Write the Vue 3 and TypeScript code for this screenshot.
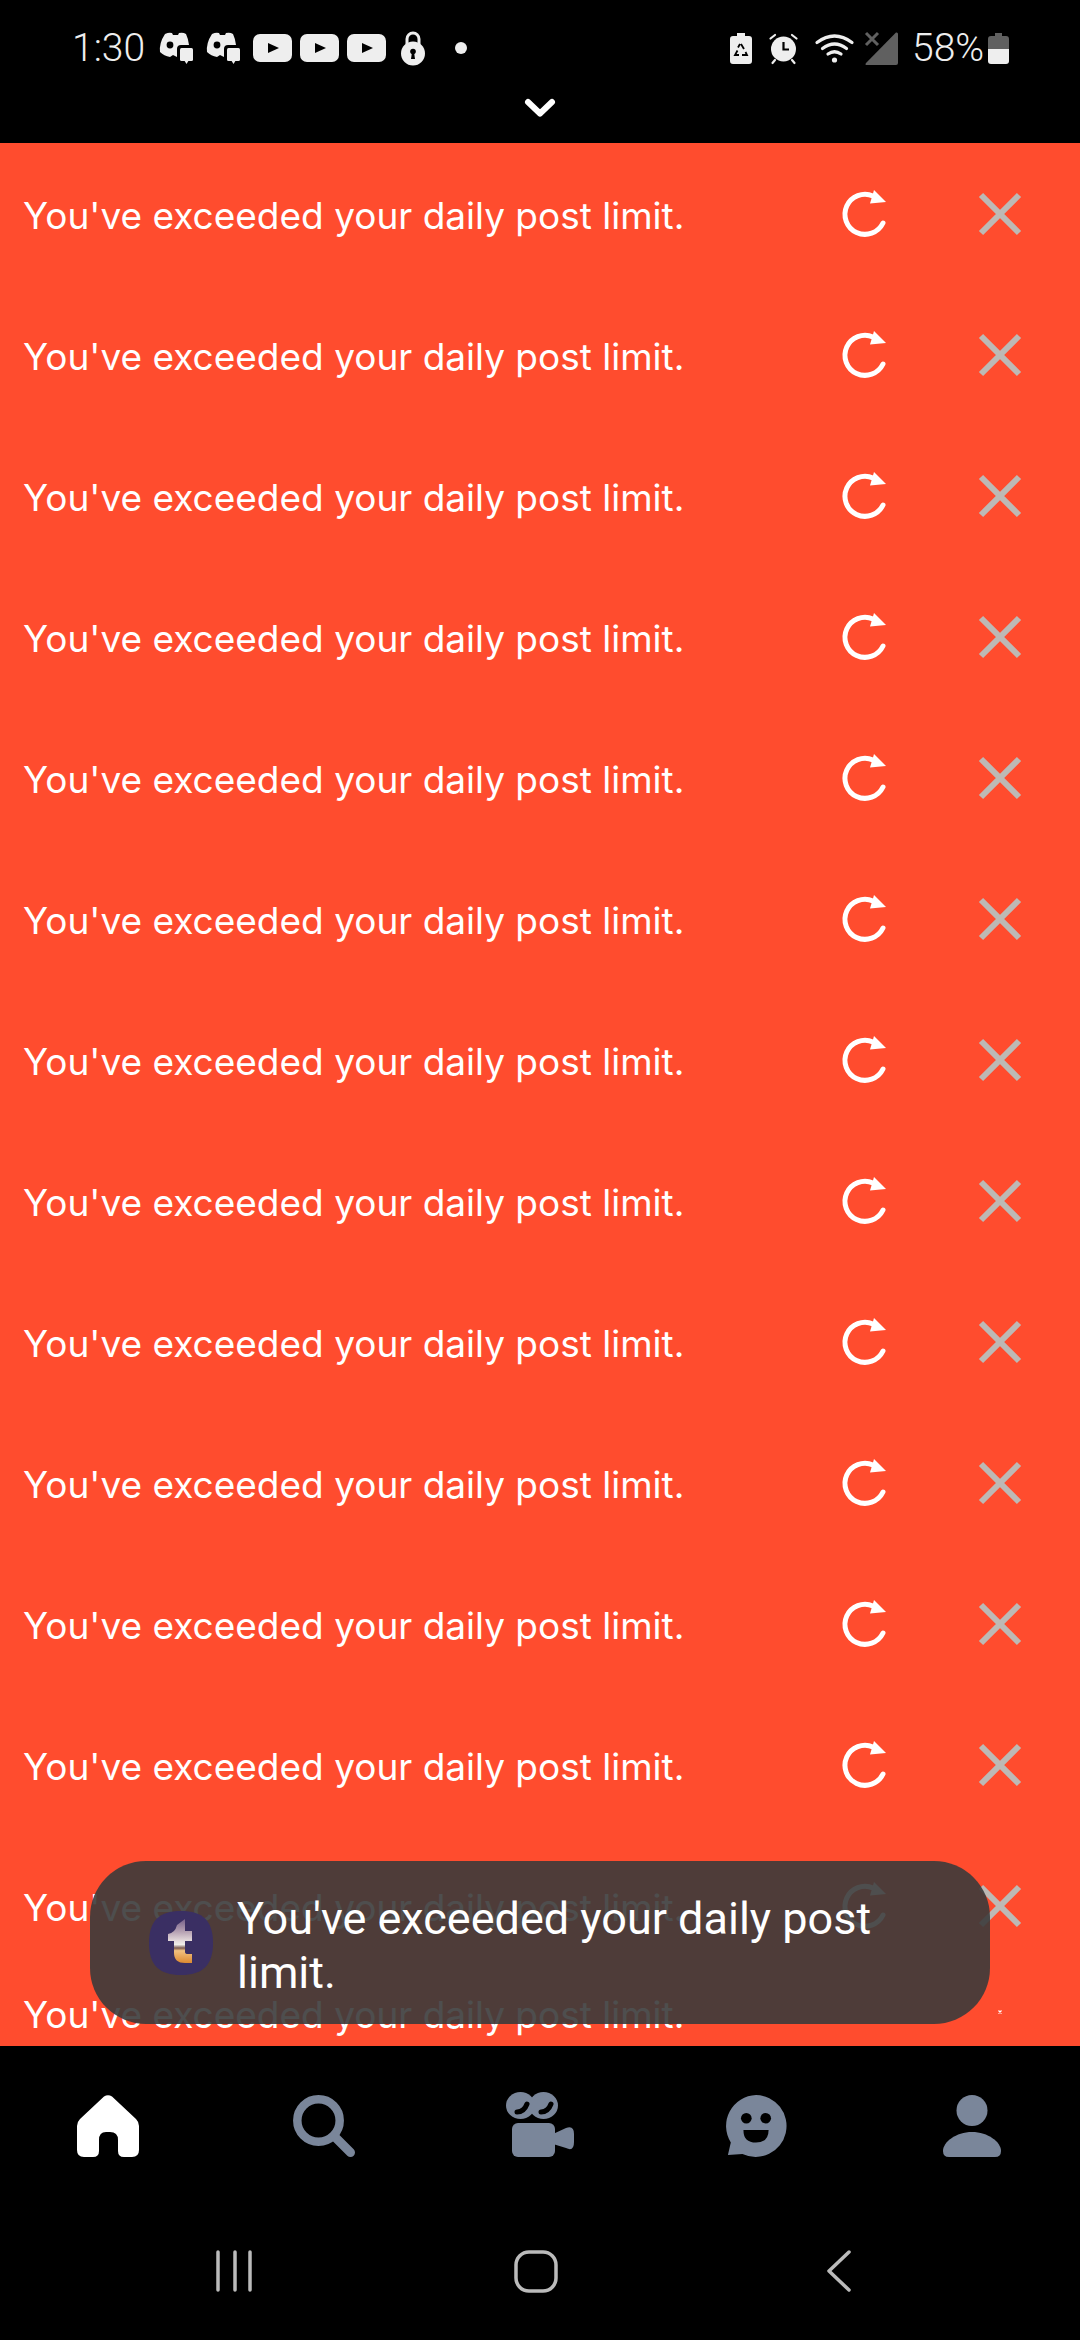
<script setup lang="ts">
const message = "You've exceeded your daily post limit."
const rows = Array.from({ length: 13 }, (_, i) => i)
</script>

<template>
  <div class="screen">
    <!-- status bar -->
    <header class="top">
      <div class="status">
        <div class="status-left">
          <span class="clock">1:30</span>
          <svg v-for="n in 2" :key="'d' + n" class="ic-discord" viewBox="0 0 34 33">
            <path fill="#eee" d="M6 2 Q10 0 13 1 L14 3 H19 L20 1 Q24 0 27 2 Q29 6 30 13 H22 Q18 13 18 17 V25 L14 23 L11 25 Q5 24 1 20 Q0 11 6 2Z" />
            <circle cx="11" cy="13" r="3.400" fill="#000" />
            <rect x="21" y="16" width="13" height="13" rx="1.500" fill="#eee" />
            <path fill="#eee" d="M25 28 H30 L27.500 32Z" />
          </svg>
          <svg v-for="n in 3" :key="'y' + n" class="ic-yt" viewBox="0 0 39 28">
            <rect width="39" height="28" rx="7" fill="#eee" />
            <path fill="#000" d="M15 9 L26 14 L15 19Z" />
          </svg>
          <svg class="ic-lock" viewBox="0 0 24 36">
            <path fill="none" stroke="#eee" stroke-width="3" d="M6 16 V9 A6 6 0 0 1 18 9 V16" />
            <circle cx="12" cy="23.500" r="12" fill="#eee" />
            <circle cx="12" cy="21.500" r="2.800" fill="#000" />
            <path fill="#000" d="M11 22 H13 L14 29 H10Z" />
          </svg>
          <span class="dot"></span>
        </div>
        <div class="status-right">
          <svg class="ic-saver" viewBox="0 0 22 31">
            <path fill="#eee" d="M7 0 H15 V3 H19 Q22 3 22 6 V28 Q22 31 19 31 H3 Q0 31 0 28 V6 Q0 3 3 3 H7Z" />
            <path fill="none" stroke="#000" stroke-width="1.800" d="M11 11 L14 16 M15.500 19 L17 22 H12 M9 22 H5 L7.500 17.500 M8 14.500 L10 11" />
          </svg>
          <svg class="ic-alarm" viewBox="0 0 29 31">
            <circle cx="14.500" cy="16" r="12.500" fill="#eee" />
            <path fill="none" stroke="#000" stroke-width="2.200" d="M14.500 9 V16.500 H20" />
            <path fill="none" stroke="#eee" stroke-width="2.200" stroke-linecap="round" d="M1.500 5.500 L6 2 M27.500 5.500 L23 2 M6 27 L3.500 30 M23 27 L25.500 30" />
          </svg>
          <svg class="ic-wifi" viewBox="0 0 39 30">
            <g fill="none" stroke="#eee" stroke-width="3.200" stroke-linecap="round">
              <path d="M2 9.500 Q19.500 -3.500 37 9.500" />
              <path d="M7.500 15.500 Q19.500 6.500 31.500 15.500" />
              <path d="M13 21 Q19.500 16.500 26 21" />
            </g>
            <circle cx="19.500" cy="27" r="2.600" fill="#eee" />
          </svg>
          <svg class="ic-signal" viewBox="0 0 33 33">
            <path fill="#606060" d="M31 0.500 Q33 0 33 2 V31 Q33 33 31 33 H2 Q-0.500 33 1 31Z" />
            <path stroke="#606060" stroke-width="3" d="M1 1 L13 13 M13 1 L1 13" />
          </svg>
          <span class="battery-num">58%</span>
          <svg class="ic-battery" viewBox="0 0 21 31">
            <path fill="#606060" d="M7 0 H14 V3 H18 Q21 3 21 6 V16 H0 V6 Q0 3 3 3 H7Z" />
            <path fill="#eee" d="M0 16 H21 V28 Q21 31 18 31 H3 Q0 31 0 28Z" />
          </svg>
        </div>
      </div>
      <svg class="chevron" viewBox="0 0 30 18">
        <path fill="none" stroke="#fff" stroke-width="6" stroke-linecap="round" stroke-linejoin="round" d="M3 3 L15 14.500 L27 3" />
      </svg>
    </header>

    <!-- failed posts -->
    <main class="list">
      <div v-for="i in rows" :key="i" class="row">
        <span class="row-text">{{ message }}</span>
        <svg class="ic-retry" viewBox="0 0 48 48">
          <path fill="none" stroke="#fff" stroke-width="5" stroke-linecap="round" d="M43 31 A20 20 0 1 1 33 4" />
          <path fill="#fff" d="M34 -2 L46 10 L30 11.500Z" />
        </svg>
        <svg class="ic-close" viewBox="0 0 48 48">
          <path stroke="#bdb9b5" stroke-width="6" d="M5 3 L43 41 M43 3 L5 41" />
        </svg>
      </div>
      <div class="row row-last">
        <span class="row-text">{{ message }}</span>
        <svg class="ic-close" viewBox="0 0 48 48">
          <path stroke="#fff" stroke-width="1.200" d="M22.500 19.500 L25.500 22.500 M25.500 19.500 L22.500 22.500" />
        </svg>
      </div>

      <div class="toast">
        <svg class="toast-logo" viewBox="0 0 64 64">
          <defs>
            <linearGradient id="tgrad" x1="0" y1="0" x2="0" y2="1">
              <stop offset="0" stop-color="#75608a" />
              <stop offset="0.300" stop-color="#b9a5b5" />
              <stop offset="0.500" stop-color="#e5dbdc" />
              <stop offset="0.580" stop-color="#f0eee9" />
              <stop offset="0.660" stop-color="#7a5a50" />
              <stop offset="0.720" stop-color="#f0c080" />
              <stop offset="1" stop-color="#dd8a30" />
            </linearGradient>
          </defs>
          <path fill="#3a2f63" d="M32 0 C54 0 64 10 64 32 C64 54 54 64 32 64 C10 64 0 54 0 32 C0 10 10 0 32 0Z" />
          <path fill="url(#tgrad)" d="M28 14 L36 8 V20 H43 V30 H36 V41 Q36 43 39 43 H43 V52 H36 Q25 52 25 42 V30 H19 V23 Q26 22 28 14Z" />
        </svg>
        <p class="toast-text">{{ message }}</p>
      </div>
    </main>

    <!-- tab bar -->
    <nav class="tabs">
      <div class="tab">
        <svg class="ic-tab" viewBox="0 0 62 62">
          <path fill="#fff" d="M27 1.500 Q31 -1 35 1.500 L59 24 Q62 27 62 31 V55 Q62 62 55 62 H47 Q41 62 41 56 V45 Q41 37 33 37 H29 Q22 37 22 45 V56 Q22 62 16 62 H7 Q0 62 0 55 V31 Q0 27 3 24Z" />
        </svg>
      </div>
      <div class="tab">
        <svg class="ic-tab" viewBox="0 0 62 62">
          <circle cx="25.500" cy="25.500" r="21.200" fill="none" stroke="#7a869a" stroke-width="8.500" />
          <path stroke="#7a869a" stroke-width="9" stroke-linecap="round" d="M42 42 L57.500 57.500" />
        </svg>
      </div>
      <div class="tab">
        <svg class="ic-camera" viewBox="0 0 68 65">
          <g fill="#7a869a">
            <ellipse cx="14.500" cy="13.500" rx="14.500" ry="13.500" />
            <ellipse cx="37.500" cy="13.500" rx="14.500" ry="13.500" />
            <rect x="6" y="31" width="43" height="34" rx="6" />
            <path d="M47 42 L60 36 Q68 33 68 42 V50 Q68 60 60 56 L47 52Z" />
          </g>
          <g fill="none" stroke="#000" stroke-width="5" stroke-linecap="round">
            <path d="M11 20 Q18 20 21 12" />
            <path d="M35 20 Q42 20 45 12" />
          </g>
        </svg>
      </div>
      <div class="tab">
        <svg class="ic-tab" viewBox="0 0 64 64">
          <path fill="#7a869a" d="M32 0 A32 32 0 1 1 18 61 L3 62 L6 49 A32 32 0 0 1 32 0Z" />
          <circle cx="22" cy="24" r="5.500" fill="#000" />
          <circle cx="42" cy="24" r="5.500" fill="#000" />
          <path fill="#000" d="M19 36 H45 Q45 49 32 49 Q19 49 19 36Z" />
        </svg>
      </div>
      <div class="tab">
        <svg class="ic-tab" viewBox="0 0 58 62">
          <circle cx="29" cy="15.500" r="15.500" fill="#7a869a" />
          <path fill="#7a869a" d="M29 37 C45 37 58 47 58 56 Q58 62 52 62 H6 Q0 62 0 56 C0 47 13 37 29 37Z" />
        </svg>
      </div>
    </nav>

    <!-- system nav -->
    <div class="sysnav">
      <svg class="ic-menu" viewBox="0 0 36 42">
        <path stroke="#bbb" stroke-width="3.500" stroke-linecap="round" d="M2 2 V40 M19 2 V40 M34 2 V40" />
      </svg>
      <svg class="ic-home" viewBox="0 0 44 43">
        <rect x="2" y="2" width="40" height="39" rx="13" fill="none" stroke="#bbb" stroke-width="3.500" />
      </svg>
      <svg class="ic-back" viewBox="0 0 32 42">
        <path fill="none" stroke="#bbb" stroke-width="3.500" stroke-linecap="round" stroke-linejoin="round" d="M29 2 L9 21 L29 40" />
      </svg>
    </div>
  </div>
</template>

<style>
html,
body {
  margin: 0;
  background: #000;
}
</style>

<style scoped>
* {
  box-sizing: border-box;
}

.screen {
  width: 1080px;
  height: 2340px;
  display: flex;
  flex-direction: column;
  background: #000;
  overflow: hidden;
}

svg {
  display: block;
  flex: none;
  overflow: visible;
}

.top {
  height: 143px;
  flex: none;
  display: flex;
  flex-direction: column;
  align-items: center;
}

.status {
  width: 100%;
  height: 96px;
  display: flex;
  align-items: center;
  justify-content: space-between;
  padding: 0 71px 0 72px;
  font-family: Roboto, "Liberation Sans", sans-serif;
  color: #eee;
}

.status-left,
.status-right {
  display: flex;
  align-items: center;
}

.clock {
  font-size: 39px;
  font-weight: 300;
  width: 87px;
}

.ic-discord {
  width: 34px;
  height: 33px;
  margin-right: 13px;
}

.ic-yt {
  width: 39px;
  height: 28px;
  margin-right: 8px;
}

.ic-lock {
  width: 24px;
  height: 36px;
  margin: 0 30px 0 7px;
}

.dot {
  width: 12px;
  height: 12px;
  border-radius: 50%;
  background: #eee;
}

.ic-saver {
  width: 22px;
  height: 31px;
  margin-right: 17px;
}

.ic-alarm {
  width: 29px;
  height: 31px;
  margin-right: 17px;
}

.ic-wifi {
  width: 39px;
  height: 30px;
  margin-right: 11px;
}

.ic-signal {
  width: 33px;
  height: 33px;
  margin-right: 14px;
}

.battery-num {
  font-size: 39px;
  font-weight: 300;
  width: 76px;
  white-space: nowrap;
}

.ic-battery {
  width: 21px;
  height: 31px;
}

.chevron {
  width: 30px;
  height: 18px;
  margin-top: 3px;
}

.list {
  position: relative;
  height: 1903px;
  flex: none;
  padding-top: 2px;
  background: #ff4c2e;
  overflow: hidden;
}

.row {
  height: 141px;
  display: flex;
  align-items: center;
  padding: 0 56px 0 23px;
}

.row-last {
  margin-top: -34px;
}

.row-text {
  flex: 1;
  font-family: Inter, "Liberation Sans", sans-serif;
  font-size: 37px;
  color: #fff;
  white-space: nowrap;
}

.ic-retry {
  width: 48px;
  height: 48px;
  margin-right: 88px;
}

.ic-close {
  width: 48px;
  height: 48px;
}

.toast {
  position: absolute;
  left: 90px;
  top: 1718px;
  width: 900px;
  height: 163px;
  display: flex;
  align-items: center;
  gap: 24px;
  padding: 0 60px 0 59px;
  border-radius: 56px;
  background: rgba(59, 59, 59, 0.9);
}

.toast-logo {
  width: 64px;
  height: 64px;
}

.toast-text {
  margin: 0;
  padding-top: 6px;
  font-family: Roboto, "Liberation Sans", sans-serif;
  font-size: 45px;
  line-height: 54px;
  color: #fff;
}

.tabs {
  height: 194px;
  flex: none;
  display: grid;
  grid-template-columns: repeat(5, 1fr);
  padding-top: 49px;
  align-items: start;
}

.tab {
  display: flex;
  justify-content: center;
}

.ic-tab {
  height: 62px;
  width: auto;
}

.ic-camera {
  width: 68px;
  height: 65px;
  margin-top: -3px;
}

.sysnav {
  height: 100px;
  flex: none;
  display: flex;
  align-items: center;
  gap: 262px;
  padding: 0 0 38px 216px;
}

.ic-menu {
  width: 36px;
  height: 42px;
}

.ic-home {
  width: 44px;
  height: 43px;
}

.ic-back {
  width: 32px;
  height: 42px;
}
</style>
